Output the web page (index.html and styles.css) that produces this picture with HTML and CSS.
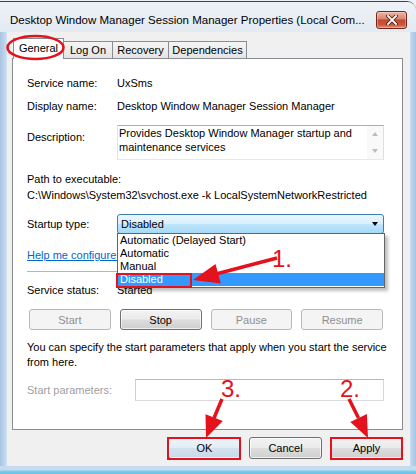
FILE: index.html
```html
<!DOCTYPE html>
<html>
<head>
<meta charset="utf-8">
<title>Desktop Window Manager Session Manager Properties</title>
<link rel="stylesheet" href="styles.css">
</head>
<body>
<div class="window">
  <div class="titlebar">
    <span class="title">Desktop Window Manager Session Manager Properties (Local Com...</span>
    <div class="close-btn">
      <svg class="close-x" width="12" height="10" viewBox="0 0 12 10">
        <path d="M2 1 L10 9 M10 1 L2 9" stroke="#5b1e14" stroke-width="3.6" stroke-linecap="square" fill="none"/>
        <path d="M2 1 L10 9 M10 1 L2 9" stroke="#ffffff" stroke-width="1.8" stroke-linecap="square" fill="none"/>
      </svg>
    </div>
  </div>
  <div class="client">
    <div class="tabs">
      <div class="tab tab-general selected">General</div>
      <div class="tab tab-logon">Log On</div>
      <div class="tab tab-recovery">Recovery</div>
      <div class="tab tab-deps">Dependencies</div>
    </div>
    <div class="panel">
      <div class="row line-row">
        <span class="label">Service name:</span><span class="value">UxSms</span>
      </div>
      <div class="row line-row row-display">
        <span class="label">Display name:</span><span class="value">Desktop Window Manager Session Manager</span>
      </div>
      <div class="row row-desc">
        <span class="label label-desc">Description:</span>
        <div class="desc-box">
          <div class="desc-text">Provides Desktop Window Manager startup and maintenance services</div>
          <div class="desc-scroll">
            <span class="scroll-up"></span>
            <span class="scroll-down"></span>
          </div>
        </div>
      </div>
      <div class="line-row row-path-label">Path to executable:</div>
      <div class="line-row path-text">C:\Windows\System32\svchost.exe -k LocalSystemNetworkRestricted</div>
      <div class="row row-startup">
        <span class="label">Startup type:</span>
        <div class="combo">
          <span class="combo-text">Disabled</span>
          <span class="combo-arrow"></span>
          <div class="dropdown">
            <div class="dd-item">Automatic (Delayed Start)</div>
            <div class="dd-item">Automatic</div>
            <div class="dd-item">Manual</div>
            <div class="dd-item dd-selected">Disabled</div>
          </div>
        </div>
      </div>
      <div class="line-row row-link"><span class="link">Help me configure service startup options.</span></div>
      <div class="separator"></div>
      <div class="row line-row row-status">
        <span class="label">Service status:</span><span class="value">Started</span>
      </div>
      <div class="svc-buttons">
        <div class="btn disabled">Start</div>
        <div class="btn">Stop</div>
        <div class="btn disabled">Pause</div>
        <div class="btn disabled">Resume</div>
      </div>
      <div class="hint">You can specify the start parameters that apply when you start the service<br>from here.</div>
      <div class="row row-params">
        <span class="label label-params">Start parameters:</span>
        <div class="params-box"></div>
      </div>
    </div>
    <div class="dialog-buttons">
      <div class="btn dbtn default">OK</div>
      <div class="btn dbtn">Cancel</div>
      <div class="btn dbtn">Apply</div>
    </div>
  </div>
  <div class="frame-bottom"></div>
</div>

<svg class="annotations" width="416" height="474" viewBox="0 0 416 474">
  <ellipse class="anno-stroke" cx="35.5" cy="47.5" rx="28" ry="11.5" stroke-width="2.6"/>
  <rect class="anno-stroke" x="117" y="274" width="74" height="13" stroke-width="2"/>
  <line class="anno-stroke" x1="277" y1="258" x2="216" y2="274" stroke-width="3.5"/>
  <polygon class="anno-fill" points="193,280 215.5,264 220.8,283.6"/>
  <text class="anno-num" x="272" y="267">1.</text>

  <text class="anno-num" x="221" y="397">3.</text>
  <line class="anno-stroke" x1="222" y1="399" x2="214" y2="418" stroke-width="3.5"/>
  <polygon class="anno-fill" points="206,438 205.5,414.3 222.8,421"/>

  <text class="anno-num" x="340" y="397">2.</text>
  <line class="anno-stroke" x1="349" y1="399" x2="358.5" y2="418" stroke-width="3.5"/>
  <polygon class="anno-fill" points="368,438 366.9,414 350.3,422"/>

  <rect class="anno-stroke" x="168" y="438" width="72" height="21" stroke-width="2"/>
  <rect class="anno-stroke" x="331" y="438" width="71" height="21" stroke-width="2"/>
</svg>
</body>
</html>
```

FILE: styles.css
```css
* { box-sizing: border-box; }

html, body {
  margin: 0;
  padding: 0;
}

body {
  width: 416px;
  height: 474px;
  overflow: hidden;
  position: relative;
  background: #eef1f5;
  font-family: "Liberation Sans", Arial, sans-serif;
  font-size: 11px;
  color: #000;
}

.window {
  margin-top: 1px;
  height: 473px;
  border-top: 1px solid #39424d;
  border-top-right-radius: 9px;
  overflow: hidden;
  display: flex;
  flex-direction: column;
  background: linear-gradient(to right, #a8c5e5 0, #bcd2eb 4px, #d3e2f1 7px, #d3e2f1 409px, #bad1ea 412px, #a8c5e5 416px);
}

/* Title bar */
.titlebar {
  height: 30px;
  flex: none;
  display: flex;
  align-items: center;
  padding: 9px 9px 3px 10px;
  background: linear-gradient(#eef2f7, #e4eaf2);
}

.title {
  flex: 1;
  font-size: 11.5px;
  line-height: 18px;
  white-space: nowrap;
  overflow: hidden;
}

.close-btn {
  width: 31px;
  height: 18px;
  flex: none;
  border: 1px solid #6e2719;
  border-radius: 3px;
  display: flex;
  align-items: center;
  justify-content: center;
  background: linear-gradient(#ebb6a8 0%, #db8670 42%, #c44a30 50%, #c9553b 78%, #e28d71 100%);
  box-shadow: inset 0 0 0 1px rgba(255, 255, 255, 0.3);
}

.close-x { display: block; }

/* Client area */
.client {
  flex: 1;
  margin: 0 6px 0 7px;
  background: #f0f0f0;
  padding: 6px 7px 0 5px;
}

.tabs {
  display: flex;
  align-items: flex-end;
  height: 21px;
  margin-left: 1px;
  margin-bottom: -1px;
  position: relative;
  z-index: 2;
}

.tab {
  height: 17px;
  margin-bottom: 1px;
  margin-left: -1px;
  border: 1px solid #898c95;
  border-bottom: none;
  background: linear-gradient(#f5f5f5, #e4e4e4);
  text-align: center;
  line-height: 16px;
  white-space: nowrap;
}

.tab.selected {
  height: 21px;
  margin-bottom: 0;
  margin-left: 0;
  background: #fff;
  line-height: 18px;
  position: relative;
  z-index: 1;
}

.tab-general { width: 51px; }
.tab-logon { width: 50px; }
.tab-recovery { width: 57px; }
.tab-deps { width: 79px; }

.panel {
  height: 372px;
  border: 1px solid #898c95;
  background: #fff;
  padding: 16px 18px 0 14px;
}

.row {
  display: flex;
  align-items: center;
}

.line-row {
  height: 16px;
  line-height: 16px;
  white-space: nowrap;
}

.label {
  width: 90px;
  flex: none;
  white-space: nowrap;
}

.value { white-space: nowrap; }

.row-display { margin-top: 7px; }

.row-desc {
  margin-top: 11px;
  align-items: flex-start;
  height: 35px;
}

.label-desc {
  padding-top: 4px;
  line-height: 16px;
}

.desc-box {
  width: 267px;
  height: 35px;
  display: flex;
  border: 1px solid;
  border-color: #abadb3 #dbdfe6 #e3e9ef #e2e3ea;
}

.desc-text {
  flex: 1;
  padding-left: 1px;
  line-height: 14px;
}

.desc-scroll {
  width: 16px;
  flex: none;
  background: #f9f9f9;
  display: flex;
  flex-direction: column;
  justify-content: space-between;
  align-items: center;
  padding: 6px 0 6px 0;
}

.scroll-up,
.scroll-down {
  width: 0;
  height: 0;
  border-left: 3.5px solid transparent;
  border-right: 3.5px solid transparent;
}

.scroll-up { border-bottom: 4px solid #bdbdbd; }
.scroll-down { border-top: 4px solid #bdbdbd; }

.row-path-label { margin-top: 11px; }

.row-startup {
  margin-top: 11px;
  height: 20px;
}

.combo {
  position: relative;
  width: 267px;
  height: 20px;
  border: 1px solid #3c7fb1;
  border-radius: 3px;
  background: linear-gradient(#eaf6fd 0%, #d9f0fc 48%, #bee6fd 52%, #a7d9f5 100%);
  display: flex;
  align-items: center;
  justify-content: space-between;
  padding-left: 3px;
  padding-right: 5px;
}

.combo-text { line-height: 18px; }

.combo-arrow {
  width: 0;
  height: 0;
  border-left: 3.5px solid transparent;
  border-right: 3.5px solid transparent;
  border-top: 4px solid #000;
}

.dropdown {
  position: absolute;
  left: -1px;
  top: 18px;
  width: 268px;
  height: 55px;
  border: 1px solid #646464;
  background: #fff;
  box-shadow: 3px 3px 3px rgba(0, 0, 0, 0.25);
  z-index: 5;
}

.dd-item {
  height: 13px;
  line-height: 13px;
  padding-left: 2px;
  white-space: nowrap;
}

.dd-selected {
  background: #3399ff;
  color: #fff;
}

/* the link is hidden under the open dropdown past the label column */
.row-link {
  margin-top: 13px;
  width: 90px;
  overflow: hidden;
}

.link {
  color: #0066cc;
  text-decoration: underline;
}

.separator {
  margin-top: 8px;
  height: 1px;
  background: #b6b6b6;
}

.row-status { margin-top: 10px; }

.svc-buttons {
  display: grid;
  grid-template-columns: repeat(4, 1fr);
  gap: 9px;
  height: 21px;
  margin: 11px 1px 0 2px;
}

.btn {
  border: 1px solid #707070;
  border-radius: 3px;
  background: linear-gradient(#f2f2f2 0%, #ebebeb 48%, #dddddd 52%, #cfcfcf 100%);
  box-shadow: inset 0 0 0 1px rgba(255, 255, 255, 0.65);
  display: flex;
  align-items: center;
  justify-content: center;
  white-space: nowrap;
}

.btn.disabled {
  border-color: #b5b9bc;
  background: #f4f4f4;
  box-shadow: none;
  color: #8f8f8f;
}

.hint {
  margin-top: 10px;
  height: 30px;
  line-height: 15px;
  white-space: nowrap;
}

.row-params {
  margin-top: 9px;
  height: 22px;
}

.label-params {
  width: 108px;
  color: #a0a0a0;
}

.params-box {
  width: 249px;
  height: 22px;
  border: 1px solid;
  border-color: #b8b8b8 #d6d6d6 #dcdcdc #cfcfcf;
  background: #fff;
}

.dialog-buttons {
  display: flex;
  justify-content: flex-end;
  gap: 8px;
  margin-top: 7px;
}

.dbtn {
  width: 73px;
  height: 22px;
}

.btn.default {
  border-color: #4d7fa8;
  background: linear-gradient(#eef4f9 0%, #e3ecf5 48%, #d3e1ee 52%, #c7d9ea 100%);
}

.frame-bottom {
  height: 8px;
  flex: none;
  background: linear-gradient(#c6dbef 0, #c6dbef 4px, #7fcdec 5px, #5cc3ea 8px);
}

/* Annotation overlay */
.annotations {
  position: absolute;
  left: 0;
  top: 0;
  pointer-events: none;
  z-index: 10;
}

.anno-stroke {
  fill: none;
  stroke: #e3121c;
}

.anno-fill {
  fill: #e3121c;
}

.anno-num {
  font-family: "Liberation Sans", Arial, sans-serif;
  font-size: 24px;
  fill: #e3121c;
}
```
